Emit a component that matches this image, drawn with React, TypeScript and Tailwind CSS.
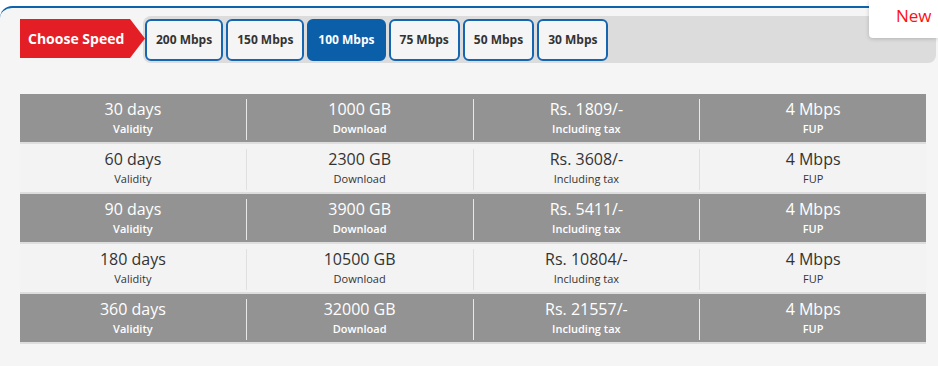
import React from "react"

const speeds = ["200 Mbps", "150 Mbps", "100 Mbps", "75 Mbps", "50 Mbps", "30 Mbps"]

const plans = [
  { days: "30 days", data: "1000 GB", price: "Rs. 1809/-", fup: "4 Mbps" },
  { days: "60 days", data: "2300 GB", price: "Rs. 3608/-", fup: "4 Mbps" },
  { days: "90 days", data: "3900 GB", price: "Rs. 5411/-", fup: "4 Mbps" },
  { days: "180 days", data: "10500 GB", price: "Rs. 10804/-", fup: "4 Mbps" },
  { days: "360 days", data: "32000 GB", price: "Rs. 21557/-", fup: "4 Mbps" },
]

const App = () => {
  return (
    <div className="relative bg-white pt-[6px] h-[366px] overflow-hidden font-['Open_Sans',sans-serif]">
      <div className="absolute right-0 top-0 z-20 w-[69px] h-[38px] bg-white rounded-bl-[4px] shadow-[0_1px_4px_rgba(0,0,0,0.18)] overflow-hidden">
        <div className="pl-[27px] pt-[5px] text-[17px] leading-[22px] text-[#ff1010] whitespace-nowrap">New</div>
      </div>

      <div className="h-full rounded-tl-[12px] border-t-2 border-[#0d63ad] bg-[#f5f5f5] pl-[20px] pt-[8px]">
        {/* speed selector */}
        <div className="flex pr-[2px]">
          <div className="relative z-10 -mr-[2px] mt-[3px] w-[125px] h-[39px] bg-[#e31e24] text-white text-[14px] font-bold leading-[39px] pl-[8px] [clip-path:polygon(0_0,110px_0,100%_50%,110px_100%,0_100%)]">
            Choose Speed
          </div>
          <div className="flex-1 h-[47px] bg-[#dcdcdc] rounded-[8px] flex items-center gap-[3px] pl-[2px]">
            {speeds.map((s) => {
              const active = s === "100 Mbps"
              return (
                <div
                  key={s}
                  className={
                    active
                      ? "h-[42px] px-[9px] rounded-[6px] border-2 border-[#0b5ea8] bg-[#0b5ea8] text-white text-[12px] font-bold flex items-center"
                      : "h-[42px] px-[9px] rounded-[6px] border-2 border-[#1565b0] bg-[#f5f5f5] text-[#333] text-[12px] font-bold flex items-center"
                  }
                >
                  {s}
                </div>
              )
            })}
          </div>
        </div>

        {/* plans table */}
        <div className="mt-[31px] w-[906px]">
          {plans.map((p, i) => {
            const dark = i % 2 === 0
            const cells = [
              { v: p.days, l: "Validity" },
              { v: p.data, l: "Download" },
              { v: p.price, l: "Including tax" },
              { v: p.fup, l: "FUP" },
            ]
            return (
              <div
                key={p.days}
                className={
                  dark
                    ? "flex h-[50px] bg-[#939393] border-b-2 border-[#dedede] text-white"
                    : "flex h-[50px] bg-[#f3f3f3] border-b-2 border-[#dedede] text-[#333]"
                }
              >
                {cells.map((c, j) => (
                  <div
                    key={c.l}
                    className={
                      j === 0
                        ? "flex-1 mt-[5px] h-[41px] flex flex-col items-center"
                        : dark
                        ? "flex-1 mt-[5px] h-[41px] flex flex-col items-center border-l border-[#e8e8e8]"
                        : "flex-1 mt-[5px] h-[41px] flex flex-col items-center border-l border-[#e0e0e0]"
                    }
                  >
                    <div className="text-[16px] leading-[20px]">{c.v}</div>
                    <div className={dark ? "mt-[3px] text-[11px] leading-[14px] font-semibold" : "mt-[3px] text-[11px] leading-[14px]"}>
                      {c.l}
                    </div>
                  </div>
                ))}
              </div>
            )
          })}
        </div>
      </div>
    </div>
  )
}

export default App
